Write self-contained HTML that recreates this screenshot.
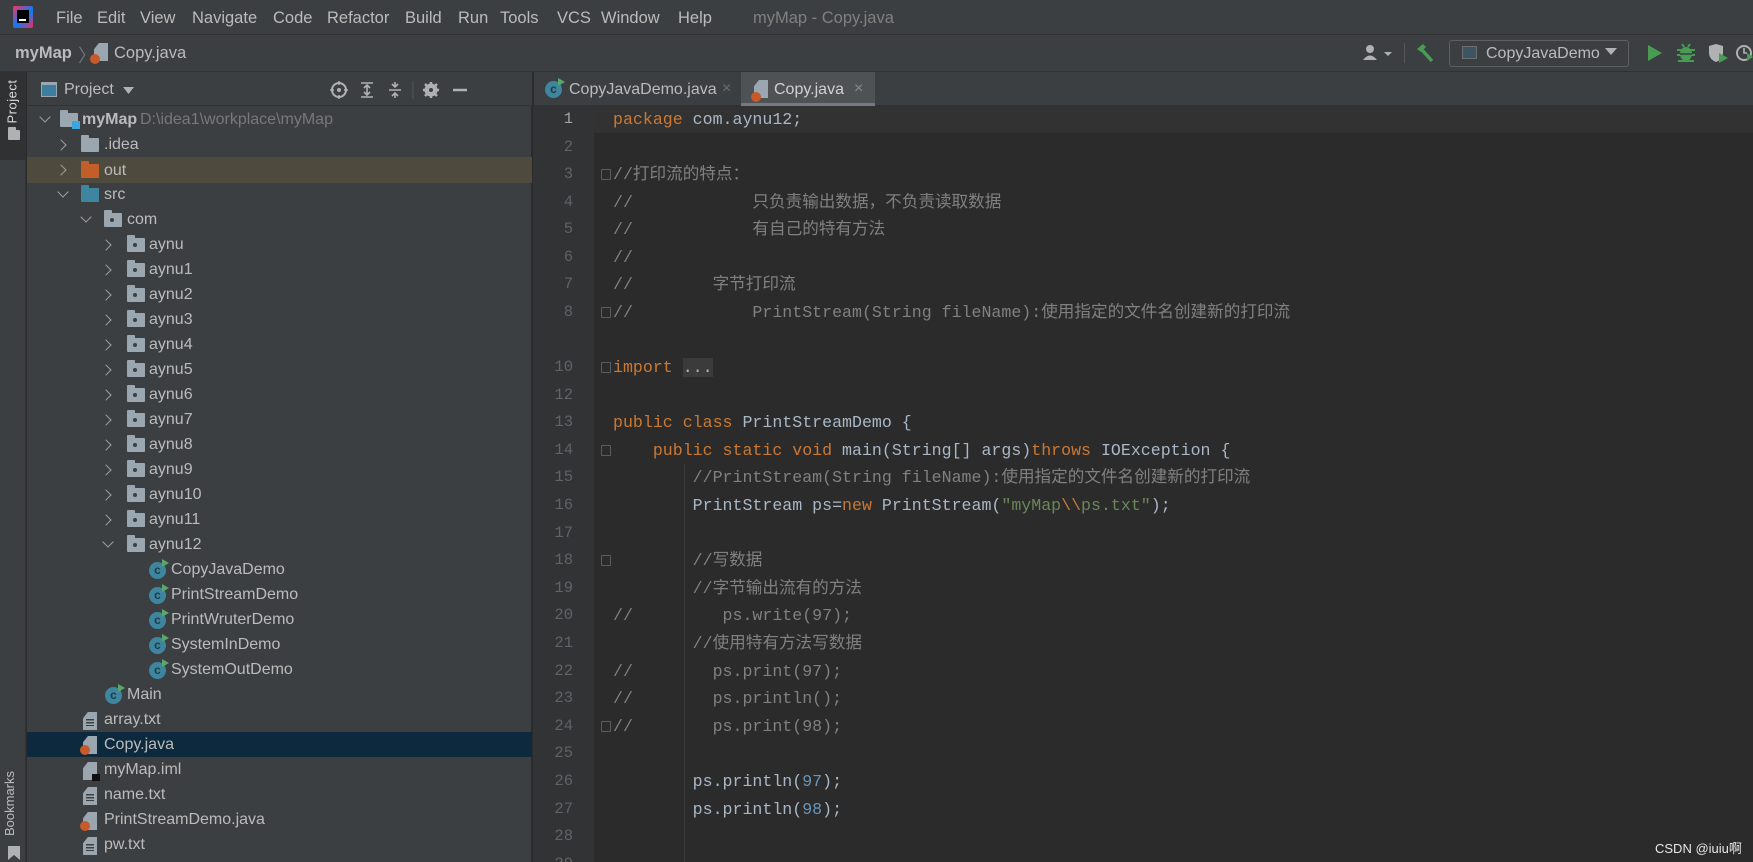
<!DOCTYPE html>
<html style="overflow:hidden;width:1753px;height:862px"><head><meta charset="utf-8"><style>
*{margin:0;padding:0;box-sizing:border-box}
body{width:1753px;height:862px;overflow:hidden;background:#2b2b2b;font-family:"Liberation Sans","Noto Sans CJK SC",sans-serif;color:#bbbbbb;position:relative}
.a{position:absolute;white-space:pre}
#menu{left:0;top:0;width:1753px;height:35px;background:#3c3f41;border-bottom:1px solid #323232}
#menu span{position:absolute;top:9px;font-size:16.5px;color:#bbbbbb}
#crumb{left:0;top:35px;width:1753px;height:37px;background:#3c3f41;border-bottom:1px solid #323232}
#stripe{left:0;top:72px;width:26px;height:790px;background:#3c3f41;border-right:1px solid #323232}
#proj{left:27px;top:72px;width:505px;height:790px;background:#3c3f41;border-right:1px solid #2b2b2b}
#phead{left:27px;top:72px;width:505px;height:34px;background:#3c3f41;border-bottom:1px solid #323232}
.row{position:absolute;left:27px;width:505px;height:25px;font-size:16px;color:#bbbbbb}
.row .t{position:absolute;top:3px;white-space:pre}
.chev{position:absolute;top:8px;width:8px;height:8px;border-right:1.6px solid #a0a0a0;border-bottom:1.6px solid #a0a0a0}
.fold{position:absolute;width:18px;height:14px;top:5px;border-radius:1px}
.fold::before{content:"";position:absolute;left:0;top:-3px;width:8px;height:4px;background:inherit;border-radius:1px}
.pk::after{content:"";position:absolute;left:6px;top:5px;width:4px;height:4px;border-radius:2px;background:#3c3f41}
.cls{position:absolute;top:4px;width:17px;height:17px;border-radius:50%;background:#3e86a0;color:#1f3a46;font-size:12px;font-weight:bold;text-align:center;line-height:17px}
.cls::after{content:"";position:absolute;right:-3px;top:-3px;border-left:7px solid #59a869;border-top:4px solid transparent;border-bottom:4px solid transparent}
.file{position:absolute;top:4px;width:14px;height:18px;background:#9aa7b0;clip-path:polygon(35% 0,100% 0,100% 100%,0 100%,0 35%)}
.lines::after{content:"";position:absolute;left:3px;top:7px;width:8px;height:7px;background:repeating-linear-gradient(#3c3f41 0 1.5px,transparent 1.5px 3px)}
.jb{position:absolute;width:10px;height:10px;border-radius:50%;background:#c75a29}
#tabs{left:534px;top:72px;width:1219px;height:34px;background:#3c3f41;border-bottom:1px solid #323232}
#gutter{left:533px;top:106px;width:61px;height:756px;background:#313335}
.ln{position:absolute;left:533px;width:40px;height:27px;line-height:27px;text-align:right;font-family:"Liberation Mono",monospace;font-size:15.5px;color:#606366;overflow:hidden}
.cl{position:absolute;left:613px;height:27px;line-height:27px;font-family:"Liberation Mono","Noto Sans CJK SC",monospace;font-size:16.6px;color:#a9b7c6;white-space:pre}
.k{color:#cc7832}.c{color:#808080}.s{color:#6a8759}.n{color:#6897bb}
.fm{position:absolute;left:601px;width:10px;height:11px;border:1px solid #5a5d60;border-radius:1px}
</style></head><body>

<div id="menu" class="a">
<div class="a" style="left:13px;top:6px;width:20px;height:22px;background:linear-gradient(135deg,#fe315d,#087cfa 55%,#fe2857);border-radius:2px"><div class="a" style="left:4px;top:4px;width:12px;height:13px;background:#000"></div><div class="a" style="left:6px;top:13px;width:7px;height:2px;background:#fff"></div></div>
<span style="left:56px">File</span><span style="left:97px">Edit</span><span style="left:140px">View</span><span style="left:192px">Navigate</span><span style="left:273px">Code</span><span style="left:327px">Refactor</span><span style="left:405px">Build</span><span style="left:458px">Run</span><span style="left:500px">Tools</span><span style="left:557px">VCS</span><span style="left:601px">Window</span><span style="left:678px">Help</span><span style="left:753px;color:#808080">myMap - Copy.java</span>
</div>

<div id="crumb" class="a">
<span class="a" style="left:15px;top:9px;font-size:16.5px;font-weight:bold;color:#bbbbbb">myMap</span>
<span class="a" style="left:78px;top:7px;font-size:18px;color:#6f737a">〉</span>
<div class="file" style="left:94px;top:8px"></div><div class="jb" style="left:90px;top:19px"></div>
<span class="a" style="left:114px;top:9px;font-size:16.5px">Copy.java</span>
<svg class="a" style="left:1360px;top:8px" width="34" height="20"><circle cx="10" cy="6" r="4" fill="#afb1b3"/><path d="M3 17 Q10 8 17 17Z" fill="#afb1b3"/><path d="M24 9h8l-4 4z" fill="#afb1b3"/></svg>
<div class="a" style="left:1404px;top:8px;width:1px;height:20px;background:#555"></div>
<svg class="a" style="left:1414px;top:8px" width="22" height="22"><path d="M3 6l6-5 3 3-5 5z" fill="#499c54"/><path d="M8 7l10 11" stroke="#499c54" stroke-width="3.5"/></svg>
<div class="a" style="left:1449px;top:5px;width:180px;height:27px;border:1px solid #5e6060;border-radius:3px"></div>
<div class="a" style="left:1462px;top:11px;width:15px;height:13px;border:1px solid #6e6e6e;background:#3d5462"></div>
<span class="a" style="left:1486px;top:10px;font-size:16px">CopyJavaDemo</span>
<svg class="a" style="left:1605px;top:13px" width="12" height="8"><path d="M0 0h12L6 7z" fill="#afb1b3"/></svg>
<svg class="a" style="left:1646px;top:8px" width="18" height="20"><path d="M2 2l14 8-14 8z" fill="#499c54"/></svg>
<svg class="a" style="left:1676px;top:7px" width="20" height="22"><ellipse cx="10" cy="12" rx="6" ry="7" fill="#499c54"/><path d="M1 8h18M1 13h18M2 19l16-0M6 2l2 3M14 2l-2 3" stroke="#499c54" stroke-width="2"/><path d="M4 12h12" stroke="#3c3f41" stroke-width="1.5"/></svg>
<svg class="a" style="left:1707px;top:8px" width="22" height="22"><path d="M2 3l7-2 7 2v7c0 5-4 8-7 9-3-1-7-4-7-9z" fill="#afb1b3"/><path d="M12 10l9 5-9 5z" fill="#499c54"/></svg>
<svg class="a" style="left:1735px;top:8px" width="18" height="22"><circle cx="9" cy="10" r="7" fill="none" stroke="#afb1b3" stroke-width="2"/><path d="M9 5v5h3" stroke="#afb1b3" stroke-width="1.6" fill="none"/><path d="M12 10l6 4-6 4z" fill="#499c54"/></svg>
</div>

<div id="stripe" class="a">
<div class="a" style="left:0;top:0;width:26px;height:88px;background:#2f3133"></div>
<span class="a" style="left:-10px;top:22px;transform:rotate(-90deg);font-size:13px;color:#dddddd;letter-spacing:0.5px">Project</span>
<div class="fold" style="left:8px;top:58px;width:12px;height:10px;background:#afb1b3"></div>
<span class="a" style="left:-23px;top:724px;transform:rotate(-90deg);font-size:13px;color:#bbbbbb">Bookmarks</span>
<svg class="a" style="left:8px;top:774px" width="12" height="14"><path d="M0 0h12v14l-6-5-6 5z" fill="#afb1b3"/></svg>
</div>

<div id="proj" class="a"></div>
<div id="phead" class="a">
<div class="a" style="left:14px;top:10px;width:16px;height:15px;border:1px solid #9aa7b0;border-top-width:3px;background:#3c7ea0"></div>
<span class="a" style="left:37px;top:9px;font-size:16px">Project</span>
<svg class="a" style="left:96px;top:15px" width="12" height="8"><path d="M0 0h11L5.5 7z" fill="#afb1b3"/></svg>
<svg class="a" style="left:302px;top:8px" width="140" height="20"><circle cx="10" cy="10" r="7" fill="none" stroke="#afb1b3" stroke-width="2"/><circle cx="10" cy="10" r="2" fill="#afb1b3"/><path d="M10 1v4M10 15v4M1 10h4M15 10h4" stroke="#afb1b3" stroke-width="1.5"/><path d="M32 3h12M32 17h12M38 5v10M35 8l3-3 3 3M35 12l3 3 3-3" stroke="#afb1b3" stroke-width="1.6" fill="none"/><path d="M60 10h12M66 2v5M66 13v5M63 4l3 3 3-3M63 16l3-3 3 3" stroke="#afb1b3" stroke-width="1.6" fill="none"/><path d="M84 1v18" stroke="#555" stroke-width="1"/><circle cx="102" cy="10" r="5" fill="none" stroke="#afb1b3" stroke-width="3"/><path d="M102 2v16M94 10h16M96 4l12 12M108 4l-12 12" stroke="#afb1b3" stroke-width="2.5"/><circle cx="102" cy="10" r="2" fill="#3c3f41"/><path d="M124 10h14" stroke="#afb1b3" stroke-width="2.5"/></svg>
</div>

<div class="row" style="top:108px"><div class="chev" style="left:14px;top:5px;transform:rotate(45deg)"></div><div class="fold" style="left:33px;background:#9aa7b0"></div><div class="a" style="left:45px;top:13px;width:8px;height:8px;background:#3ba5e0"></div><span class="t" style="left:55px;font-weight:bold">myMap</span><span class="t" style="left:113px;color:#787878">D:\idea1\workplace\myMap</span></div>
<div class="row" style="top:133px"><div class="chev" style="left:30px;transform:rotate(-45deg)"></div><div class="fold" style="left:54px;background:#9aa7b0"></div><span class="t" style="left:77px">.idea</span></div>
<div class="row" style="top:157px;background:#4e4a3e;height:26px"><div class="chev" style="left:30px;top:9px;transform:rotate(-45deg)"></div><div class="fold" style="left:54px;top:7px;background:#c25e2a"></div><span class="t" style="left:77px;top:5px">out</span></div>
<div class="row" style="top:183px"><div class="chev" style="left:32px;top:5px;transform:rotate(45deg)"></div><div class="fold" style="left:54px;background:#3e86a0"></div><span class="t" style="left:77px">src</span></div>
<div class="row" style="top:208px"><div class="chev" style="left:55px;top:5px;transform:rotate(45deg)"></div><div class="fold pk" style="left:77px;background:#9aa7b0"></div><span class="t" style="left:100px">com</span></div>
<div class="row" style="top:233px"><div class="chev" style="left:75px;transform:rotate(-45deg)"></div><div class="fold pk" style="left:100px;background:#9aa7b0"></div><span class="t" style="left:122px">aynu</span></div>
<div class="row" style="top:258px"><div class="chev" style="left:75px;transform:rotate(-45deg)"></div><div class="fold pk" style="left:100px;background:#9aa7b0"></div><span class="t" style="left:122px">aynu1</span></div>
<div class="row" style="top:283px"><div class="chev" style="left:75px;transform:rotate(-45deg)"></div><div class="fold pk" style="left:100px;background:#9aa7b0"></div><span class="t" style="left:122px">aynu2</span></div>
<div class="row" style="top:308px"><div class="chev" style="left:75px;transform:rotate(-45deg)"></div><div class="fold pk" style="left:100px;background:#9aa7b0"></div><span class="t" style="left:122px">aynu3</span></div>
<div class="row" style="top:333px"><div class="chev" style="left:75px;transform:rotate(-45deg)"></div><div class="fold pk" style="left:100px;background:#9aa7b0"></div><span class="t" style="left:122px">aynu4</span></div>
<div class="row" style="top:358px"><div class="chev" style="left:75px;transform:rotate(-45deg)"></div><div class="fold pk" style="left:100px;background:#9aa7b0"></div><span class="t" style="left:122px">aynu5</span></div>
<div class="row" style="top:383px"><div class="chev" style="left:75px;transform:rotate(-45deg)"></div><div class="fold pk" style="left:100px;background:#9aa7b0"></div><span class="t" style="left:122px">aynu6</span></div>
<div class="row" style="top:408px"><div class="chev" style="left:75px;transform:rotate(-45deg)"></div><div class="fold pk" style="left:100px;background:#9aa7b0"></div><span class="t" style="left:122px">aynu7</span></div>
<div class="row" style="top:433px"><div class="chev" style="left:75px;transform:rotate(-45deg)"></div><div class="fold pk" style="left:100px;background:#9aa7b0"></div><span class="t" style="left:122px">aynu8</span></div>
<div class="row" style="top:458px"><div class="chev" style="left:75px;transform:rotate(-45deg)"></div><div class="fold pk" style="left:100px;background:#9aa7b0"></div><span class="t" style="left:122px">aynu9</span></div>
<div class="row" style="top:483px"><div class="chev" style="left:75px;transform:rotate(-45deg)"></div><div class="fold pk" style="left:100px;background:#9aa7b0"></div><span class="t" style="left:122px">aynu10</span></div>
<div class="row" style="top:508px"><div class="chev" style="left:75px;transform:rotate(-45deg)"></div><div class="fold pk" style="left:100px;background:#9aa7b0"></div><span class="t" style="left:122px">aynu11</span></div>
<div class="row" style="top:533px"><div class="chev" style="left:77px;top:5px;transform:rotate(45deg)"></div><div class="fold pk" style="left:100px;background:#9aa7b0"></div><span class="t" style="left:122px">aynu12</span></div>
<div class="row" style="top:558px"><div class="cls" style="left:122px">c</div><span class="t" style="left:144px">CopyJavaDemo</span></div>
<div class="row" style="top:583px"><div class="cls" style="left:122px">c</div><span class="t" style="left:144px">PrintStreamDemo</span></div>
<div class="row" style="top:608px"><div class="cls" style="left:122px">c</div><span class="t" style="left:144px">PrintWruterDemo</span></div>
<div class="row" style="top:633px"><div class="cls" style="left:122px">c</div><span class="t" style="left:144px">SystemInDemo</span></div>
<div class="row" style="top:658px"><div class="cls" style="left:122px">c</div><span class="t" style="left:144px">SystemOutDemo</span></div>
<div class="row" style="top:683px"><div class="cls" style="left:78px">c</div><span class="t" style="left:100px">Main</span></div>
<div class="row" style="top:708px"><div class="file lines" style="left:56px"></div><span class="t" style="left:77px">array.txt</span></div>
<div class="row" style="top:732px;background:#0d293e;height:25px"><div class="file" style="left:56px"></div><div class="jb" style="left:53px;top:13px"></div><span class="t" style="left:77px;top:4px">Copy.java</span></div>
<div class="row" style="top:758px"><div class="file" style="left:56px"></div><div class="a" style="left:65px;top:16px;width:8px;height:7px;background:#111"></div><span class="t" style="left:77px">myMap.iml</span></div>
<div class="row" style="top:783px"><div class="file lines" style="left:56px"></div><span class="t" style="left:77px">name.txt</span></div>
<div class="row" style="top:808px"><div class="file" style="left:56px"></div><div class="jb" style="left:53px;top:13px"></div><span class="t" style="left:77px">PrintStreamDemo.java</span></div>
<div class="row" style="top:833px"><div class="file lines" style="left:56px"></div><span class="t" style="left:77px">pw.txt</span></div>

<div id="tabs" class="a">
<div class="cls" style="left:11px;top:9px">c</div>
<span class="a" style="left:35px;top:9px;font-size:16px">CopyJavaDemo.java</span>
<span class="a" style="left:188px;top:8px;font-size:16px;color:#6e6e6e">×</span>
<div class="a" style="left:207px;top:0;width:134px;height:34px;background:#4e5254;border-bottom:3px solid #747a80"></div>
<div class="file" style="left:220px;top:8px"></div><div class="jb" style="left:217px;top:20px"></div>
<span class="a" style="left:240px;top:9px;font-size:16px;color:#d0d0d0">Copy.java</span>
<span class="a" style="left:320px;top:8px;font-size:16px;color:#8a8a8a">×</span>
</div>

<div id="gutter" class="a"></div>
<div class="a" style="left:594px;top:106px;width:1159px;height:27px;background:#323232"></div>
<div class="a" style="left:684px;top:464px;width:1px;height:398px;background:#3b3b3b"></div>

<div class="ln" style="top:106px;color:#a4a3a3">1</div><div class="cl" style="top:106px"><span class="k">package</span> com.aynu12;</div>
<div class="ln" style="top:134px">2</div>
<div class="ln" style="top:161px">3</div><div class="cl c" style="top:161px">//打印流的特点：</div><div class="fm" style="top:169px"></div>
<div class="ln" style="top:189px">4</div><div class="cl c" style="top:189px">//            只负责输出数据，不负责读取数据</div>
<div class="ln" style="top:216px">5</div><div class="cl c" style="top:216px">//            有自己的特有方法</div>
<div class="ln" style="top:244px">6</div><div class="cl c" style="top:244px">//</div>
<div class="ln" style="top:271px">7</div><div class="cl c" style="top:271px">//        字节打印流</div>
<div class="ln" style="top:299px">8</div><div class="cl c" style="top:299px">//            PrintStream(String fileName):使用指定的文件名创建新的打印流</div><div class="fm" style="top:307px"></div>
<div class="ln" style="top:354px">10</div><div class="cl" style="top:354px"><span class="k">import</span> <span style="background:#3b3b3b;color:#a9b7c6">...</span></div><div class="fm" style="top:362px"></div>
<div class="ln" style="top:382px">12</div>
<div class="ln" style="top:409px">13</div><div class="cl" style="top:409px"><span class="k">public class</span> PrintStreamDemo {</div>
<div class="ln" style="top:437px">14</div><div class="cl" style="top:437px">    <span class="k">public static void</span> main(String[] args)<span class="k">throws</span> IOException {</div><div class="fm" style="top:445px"></div>
<div class="ln" style="top:464px">15</div><div class="cl c" style="top:464px">        //PrintStream(String fileName):使用指定的文件名创建新的打印流</div>
<div class="ln" style="top:492px">16</div><div class="cl" style="top:492px">        PrintStream ps=<span class="k">new</span> PrintStream(<span class="s">"myMap</span><span class="k">\\</span><span class="s">ps.txt"</span>);</div>
<div class="ln" style="top:520px">17</div>
<div class="ln" style="top:547px">18</div><div class="cl c" style="top:547px">        //写数据</div><div class="fm" style="top:555px"></div>
<div class="ln" style="top:575px">19</div><div class="cl c" style="top:575px">        //字节输出流有的方法</div>
<div class="ln" style="top:602px">20</div><div class="cl c" style="top:602px">//         ps.write(97);</div>
<div class="ln" style="top:630px">21</div><div class="cl c" style="top:630px">        //使用特有方法写数据</div>
<div class="ln" style="top:658px">22</div><div class="cl c" style="top:658px">//        ps.print(97);</div>
<div class="ln" style="top:685px">23</div><div class="cl c" style="top:685px">//        ps.println();</div>
<div class="ln" style="top:713px">24</div><div class="cl c" style="top:713px">//        ps.print(98);</div><div class="fm" style="top:721px"></div>
<div class="ln" style="top:740px">25</div>
<div class="ln" style="top:768px">26</div><div class="cl" style="top:768px">        ps.println(<span class="n">97</span>);</div>
<div class="ln" style="top:796px">27</div><div class="cl" style="top:796px">        ps.println(<span class="n">98</span>);</div>
<div class="ln" style="top:823px">28</div>
<div class="ln" style="top:851px;height:11px">29</div>
<div class="a" style="left:1620px;top:836px;width:133px;height:22px;background:#2b2b2b"></div>
<span class="a" style="left:1655px;top:838px;font-size:13px;color:#e8e8e8">CSDN @iuiu啊</span>
</body></html>
